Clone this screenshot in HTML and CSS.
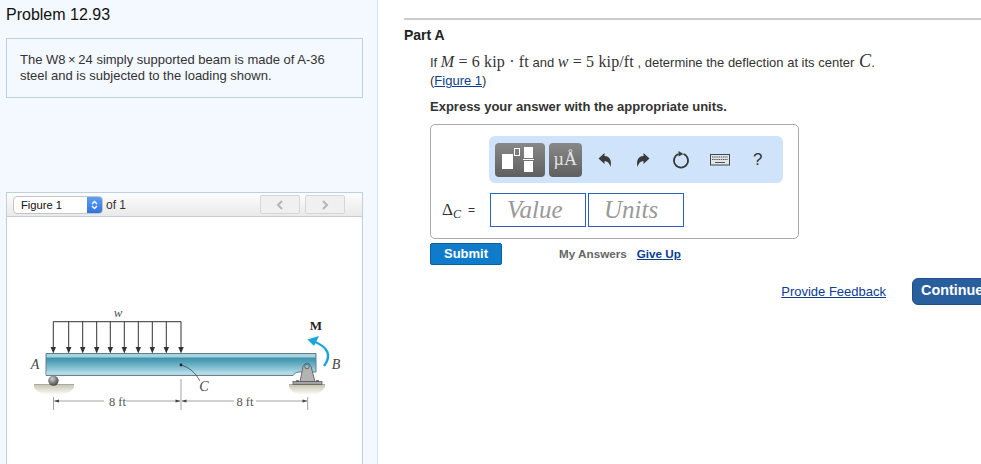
FILE: index.html
```html
<!DOCTYPE html>
<html>
<head>
    <title>Problem 12.93</title>
    <link rel="stylesheet" href="styles.css">
</head>
<body>
    <div class="page">
        <aside class="sidebar">
            <h1>Problem 12.93</h1>
            <div class="statement">The W8&thinsp;×&thinsp;24 simply supported beam is made of A-36 steel and is subjected to the loading shown.</div>

            <div class="figure-panel">
                <div class="figure-bar">
                    <div class="figure-select">
                        <span class="select-label">Figure 1</span>
                        <span class="select-arrows">
                            <svg width="9" height="12" viewBox="0 0 9 12"><path d="M2 5 L4.5 2.5 L7 5 M2 7 L4.5 9.5 L7 7" fill="none" stroke="#fff" stroke-width="1.4"/></svg>
                        </span>
                    </div>
                    <span class="figure-count">of 1</span>
                    <div class="figure-nav">
                        <span class="nav-btn"><svg width="8" height="10" viewBox="0 0 8 10"><path d="M6 1 L2 5 L6 9" fill="none" stroke="#b5b5b5" stroke-width="2"/></svg></span>
                        <span class="nav-btn"><svg width="8" height="10" viewBox="0 0 8 10"><path d="M2 1 L6 5 L2 9" fill="none" stroke="#b5b5b5" stroke-width="2"/></svg></span>
                    </div>
                </div>
                <div class="figure-body">
                    <svg class="beam" width="340" height="169" viewBox="0 0 340 169">
                        <defs>
                            <linearGradient id="web" x1="0" y1="0" x2="0" y2="1">
                                <stop offset="0" stop-color="#2f8199"/>
                                <stop offset="0.35" stop-color="#4f9fb8"/>
                                <stop offset="0.8" stop-color="#9fd0de"/>
                                <stop offset="1" stop-color="#b7dce8"/>
                            </linearGradient>
                            <linearGradient id="ground" x1="0" y1="0" x2="0" y2="1">
                                <stop offset="0" stop-color="#c6c4ac"/>
                                <stop offset="1" stop-color="#ffffff"/>
                            </linearGradient>
                            <radialGradient id="ball" cx="0.4" cy="0.35" r="0.7">
                                <stop offset="0" stop-color="#cfcfcf"/>
                                <stop offset="1" stop-color="#3c3c3c"/>
                            </radialGradient>
                        </defs>

                        <!-- ground -->
                        <path d="M14 89.5 H54 V92 Q50 100 34 100 Q18 100 14 92 Z" fill="url(#ground)"/>
                        <path d="M269 89.5 H305 V92 Q301 100 287 100 Q273 100 269 92 Z" fill="url(#ground)"/>
                        <line x1="14" y1="89.5" x2="54" y2="89.5" stroke="#999" stroke-width="0.8"/>
                        <line x1="269" y1="89.5" x2="305" y2="89.5" stroke="#999" stroke-width="0.8"/>

                        <!-- beam -->
                        <path d="M26 58.5 H296 V77 H279 Q275 77 273 80.5 H26 Z" fill="url(#web)" stroke="#5f747e" stroke-width="0.9"/>
                        <rect x="26.5" y="59" width="269" height="3.5" fill="#a9d2e0"/>
                        <rect x="26.5" y="76.5" width="246" height="3.5" fill="#b4d9e6"/>

                        <!-- supports -->
                        <circle cx="33.4" cy="85.6" r="5.2" fill="url(#ball)"/>
                        <rect x="273" y="86.5" width="29" height="3" fill="#a3a3a3" stroke="#555" stroke-width="0.7"/>
                        <path d="M276 86 H279 M296 86 H299" stroke="#555" stroke-width="1.4"/>
                        <path d="M280 86.5 L283 71.5 Q287 64.5 291 71.5 L295 86.5 Z" fill="#b3b3b3" stroke="#555" stroke-width="0.8"/>
                        <circle cx="287" cy="71.5" r="2.3" fill="#7fc4da" stroke="#555" stroke-width="0.8"/>

                        <!-- distributed load -->
                        <g stroke="#333" stroke-width="1" fill="none">
                            <path d="M33.3 26.7 H161"/>
                            <path d="M33.3 26.7 V53"/>
                            <path d="M48.7 26.7 V53"/>
                            <path d="M62.7 26.7 V53"/>
                            <path d="M76.7 26.7 V53"/>
                            <path d="M90.3 26.7 V53"/>
                            <path d="M104.3 26.7 V53"/>
                            <path d="M118.3 26.7 V53"/>
                            <path d="M132.3 26.7 V53"/>
                            <path d="M146.3 26.7 V53"/>
                            <path d="M161 26.7 V53"/>
                        </g>
                        <g fill="#333">
                            <path d="M30.6 52 H36 L33.3 58.5 Z"/>
                            <path d="M46 52 H51.4 L48.7 58.5 Z"/>
                            <path d="M60 52 H65.4 L62.7 58.5 Z"/>
                            <path d="M74 52 H79.4 L76.7 58.5 Z"/>
                            <path d="M87.6 52 H93 L90.3 58.5 Z"/>
                            <path d="M101.6 52 H107 L104.3 58.5 Z"/>
                            <path d="M115.6 52 H121 L118.3 58.5 Z"/>
                            <path d="M129.6 52 H135 L132.3 58.5 Z"/>
                            <path d="M143.6 52 H149 L146.3 58.5 Z"/>
                            <path d="M158.3 52 H163.7 L161 58.5 Z"/>
                        </g>

                        <!-- point C -->
                        <circle cx="161" cy="70" r="1.4" fill="#222"/>
                        <path d="M161 70 Q173 73 180 86" fill="none" stroke="#333" stroke-width="0.7"/>

                        <!-- moment -->
                        <path d="M304 71 Q316 55 293 46" fill="none" stroke="#19a5dc" stroke-width="2.4"/>
                        <path d="M287.5 44.5 L299 41 L294 51 Z" fill="#19a5dc"/>

                        <!-- dimensions -->
                        <g stroke="#999" stroke-width="0.9" fill="none">
                            <path d="M33.5 102 V115"/>
                            <path d="M161 84 V115"/>
                            <path d="M287.7 102 V115"/>
                            <path d="M34 106 H84"/>
                            <path d="M106 106 H160"/>
                            <path d="M162 106 H214"/>
                            <path d="M236 106 H287"/>
                        </g>
                        <g fill="#444">
                            <path d="M34 106 L39 104.5 V107.5 Z"/>
                            <path d="M160.5 106 L155.5 104.5 V107.5 Z"/>
                            <path d="M161.5 106 L166.5 104.5 V107.5 Z"/>
                            <path d="M287.5 106 L282.5 104.5 V107.5 Z"/>
                        </g>

                        <!-- labels -->
                        <text class="fig-w" x="98" y="22" text-anchor="middle">w</text>
                        <text class="fig-label" x="15" y="74" text-anchor="middle">A</text>
                        <text class="fig-label" x="316" y="74" text-anchor="middle">B</text>
                        <text class="fig-label" x="184" y="96" text-anchor="middle">C</text>
                        <text class="fig-bold" x="296" y="35" text-anchor="middle">M</text>
                        <text class="fig-dim" x="97.5" y="110.5" text-anchor="middle">8 ft</text>
                        <text class="fig-dim" x="225" y="110.5" text-anchor="middle">8 ft</text>
                    </svg>
                </div>
            </div>
        </aside>

        <main class="content">
            <h2>Part A</h2>
            <div class="question">
                <p class="prompt">If <span class="math"><i>M</i> = 6 kip · ft</span> and <span class="math"><i>w</i> = 5 kip/ft</span> , determine the deflection at its center <span class="math math-point"><i>C</i></span>.<br>(<a href="#">Figure 1</a>)</p>
                <p class="express">Express your answer with the appropriate units.</p>

                <div class="answer-box">
                    <div class="toolbar">
                        <div class="tool tool-wide">
                            <svg width="50" height="34" viewBox="0 0 50 34">
                                <rect x="7" y="11" width="11" height="15" fill="#fff"/>
                                <rect x="19.5" y="5.5" width="5" height="7" fill="none" stroke="#fff"/>
                                <rect x="29" y="4" width="9" height="11" fill="#fff"/>
                                <rect x="28" y="16" width="11" height="1" fill="#fff"/>
                                <rect x="29" y="18" width="9" height="11" fill="#fff"/>
                            </svg>
                        </div>
                        <div class="tool tool-units">µÅ</div>
                        <div class="tool-icons">
                            <span class="icon-cell"><svg width="16" height="16" viewBox="0 0 16 16"><path d="M1.5 6.5 L7.5 1 V4 C12.5 4 15 8 13.5 15 C12.5 11 10.5 9 7.5 9 V12 Z" fill="#3a3a3a"/></svg></span>
                            <span class="icon-cell"><svg width="16" height="16" viewBox="0 0 16 16"><path d="M14.5 6.5 L8.5 1 V4 C3.5 4 1 8 2.5 15 C3.5 11 5.5 9 8.5 9 V12 Z" fill="#3a3a3a"/></svg></span>
                            <span class="icon-cell"><svg width="18" height="18" viewBox="0 0 18 18"><path d="M6.5 3 A7 7 0 1 0 11.5 3" fill="none" stroke="#3a3a3a" stroke-width="1.8"/><path d="M6.5 0 L11.5 3 L6.5 5.5 Z" fill="#3a3a3a"/></svg></span>
                            <span class="icon-cell"><svg width="22" height="14" viewBox="0 0 22 14"><rect x="1.5" y="1.5" width="19" height="10.5" fill="#dfe6ee" stroke="#444"/><path d="M3 4 H19 M3 6.5 H19" stroke="#555" stroke-width="1" stroke-dasharray="1.5 0.7"/><path d="M6 9.5 H16" stroke="#555"/></svg></span>
                            <span class="icon-cell help">?</span>
                        </div>
                    </div>
                    <div class="answer-row">
                        <span class="answer-label"><span class="delta">Δ<i>C</i></span><span class="equals">=</span></span>
                        <div class="answer-input input-value">Value</div>
                        <div class="answer-input input-units">Units</div>
                    </div>
                </div>

                <div class="actions">
                    <button class="submit">Submit</button>
                    <span class="my-answers">My Answers</span>
                    <a class="give-up" href="#">Give Up</a>
                </div>
            </div>
            <div class="footer-row">
                <a class="feedback" href="#">Provide Feedback</a>
                <button class="continue">Continue</button>
            </div>
        </main>
    </div>
</body>
</html>
```

FILE: styles.css
```css
body {
    margin: 0;
    font-family: "Liberation Sans", Arial, sans-serif;
    color: #333;
    background-color: white;
    overflow: hidden;
}
.page {
    display: flex;
    height: 464px;
    overflow: hidden;
}
.sidebar {
    width: 378px;
    flex-shrink: 0;
    box-sizing: border-box;
    background-color: #f4f8ff;
    border-right: 1px solid #dbe5f0;
    padding: 5px 14px 0 6px;
    display: flex;
    flex-direction: column;
}
h1 {
    margin: 0;
    font-size: 16px;
    font-weight: normal;
    line-height: 19px;
    color: #111;
}
.statement {
    margin-top: 14px;
    height: 60px;
    box-sizing: border-box;
    border: 1px solid #bcd0e0;
    padding: 13px 20px 0 13px;
    font-size: 13px;
    line-height: 16px;
}
.figure-panel {
    margin-top: 94px;
    flex: 1;
    border: 1px solid #bcd0e0;
    border-bottom: none;
    background-color: white;
}
.figure-bar {
    height: 24px;
    box-sizing: border-box;
    display: flex;
    align-items: center;
    padding: 0 17px 0 6px;
    border-bottom: 1px solid #c4ccd4;
    background: linear-gradient(#fdfdfd, #e9e9e9);
}
.figure-select {
    width: 90px;
    height: 18px;
    box-sizing: border-box;
    display: flex;
    border: 1px solid #c5c5c5;
    border-radius: 4px;
    background-color: white;
    overflow: hidden;
}
.select-label {
    flex: 1;
    padding-left: 7px;
    font-size: 11.2px;
    line-height: 16px;
    color: #111;
}
.select-arrows {
    width: 15px;
    display: flex;
    align-items: center;
    justify-content: center;
    background: linear-gradient(#5d9ff5, #2e73e0);
}
.figure-count {
    margin-left: 3px;
    font-size: 12px;
}
.figure-nav {
    margin-left: auto;
    display: flex;
    gap: 5px;
}
.nav-btn {
    width: 40px;
    height: 19px;
    box-sizing: border-box;
    display: flex;
    align-items: center;
    justify-content: center;
    border: 1px solid #d6d6d6;
    border-radius: 2px;
    background-color: #f0f0f0;
}
.figure-body {
    padding: 78px 0 0 13px;
}
.beam {
    display: block;
}
.fig-label {
    font-family: "Liberation Serif", serif;
    font-style: italic;
    font-size: 14px;
    fill: #444;
}
.fig-w {
    font-family: "Liberation Serif", serif;
    font-style: italic;
    font-size: 13px;
    fill: #555;
}
.fig-bold {
    font-family: "Liberation Serif", serif;
    font-weight: bold;
    font-size: 13px;
    fill: #222;
}
.fig-dim {
    font-family: "Liberation Serif", serif;
    font-size: 12.5px;
    fill: #555;
}
.content {
    flex: 1;
    min-width: 0;
    padding: 18px 0 0 26px;
}
h2 {
    margin: 0;
    padding-top: 7px;
    border-top: 2px solid #ccc;
    font-size: 14px;
    line-height: 16px;
    color: #222;
}
.question {
    padding-left: 26px;
}
.prompt {
    margin: 10px 0 0;
    font-size: 13px;
    line-height: 18px;
}
.math {
    font-family: "Liberation Serif", serif;
    font-size: 16px;
    letter-spacing: 0.15px;
}
.math-point {
    margin-left: 1px;
    font-size: 18px;
    line-height: 14px;
}
a {
    color: #0b3d91;
}
.express {
    margin: 9px 0 0;
    font-size: 13px;
    font-weight: bold;
    line-height: 16px;
}
.answer-box {
    margin-top: 9px;
    width: 369px;
    height: 115px;
    box-sizing: border-box;
    border: 1px solid #aaa;
    border-radius: 5px;
    padding: 11px 15px 0 58px;
}
.toolbar {
    height: 47px;
    box-sizing: border-box;
    display: flex;
    align-items: center;
    gap: 4px;
    padding: 0 6px;
    background-color: #cfe4fb;
    border-radius: 6px;
}
.tool {
    height: 34px;
    box-sizing: border-box;
    display: flex;
    align-items: center;
    justify-content: center;
    border-radius: 4px;
    background: linear-gradient(#888, #5f5f5f);
    color: #fff;
}
.tool-wide {
    width: 50px;
}
.tool-units {
    width: 34px;
    font-family: "Liberation Serif", serif;
    font-size: 18px;
    color: #e4e4e4;
}
.tool-icons {
    flex: 1;
    display: grid;
    grid-template-columns: repeat(5, 38.3px);
    align-items: center;
}
.icon-cell {
    display: flex;
    justify-content: center;
    align-items: center;
}
.help {
    font-size: 17px;
    color: #333;
}
.answer-row {
    margin-top: 10px;
    display: flex;
    align-items: center;
    gap: 2px;
}
.answer-label {
    width: 46px;
    margin-left: -47px;
    display: flex;
    align-items: center;
    white-space: nowrap;
}
.delta {
    font-family: "Liberation Serif", serif;
    font-size: 17px;
}
.delta i {
    font-size: 12px;
    position: relative;
    top: 3px;
}
.equals {
    margin-left: 7px;
    font-size: 12px;
}
.answer-input {
    width: 96px;
    height: 34px;
    box-sizing: border-box;
    border: 1px solid #2a62c4;
    font-family: "Liberation Serif", serif;
    font-style: italic;
    font-size: 25px;
    line-height: 31px;
    color: #999;
}
.input-value {
    padding-left: 16px;
}
.input-units {
    padding-left: 15px;
}
.actions {
    margin-top: 4px;
    display: flex;
    align-items: center;
    font-size: 11.7px;
    font-weight: bold;
}
.submit {
    width: 72px;
    height: 22px;
    padding: 0 0 2px;
    border: 1px solid #0d5f9f;
    border-radius: 2px;
    background-color: #0f7bcb;
    color: white;
    font-family: inherit;
    font-size: 13px;
    font-weight: bold;
}
.my-answers {
    margin: 0 0 2px 57px;
    color: #666;
}
.give-up {
    margin: 0 0 2px 10px;
}
.footer-row {
    margin-top: 13px;
    display: flex;
    align-items: center;
    justify-content: flex-end;
    margin-right: -10px;
}
.feedback {
    font-size: 13px;
    margin-right: 26px;
}
.continue {
    width: 79px;
    height: 27px;
    flex-shrink: 0;
    padding: 0 0 3px 8px;
    text-align: left;
    border: 1px solid #1e4f8a;
    border-radius: 6px;
    background-color: #2a5f9e;
    color: white;
    font-family: inherit;
    font-size: 14.4px;
    font-weight: bold;
    white-space: nowrap;
    overflow: hidden;
}
```
